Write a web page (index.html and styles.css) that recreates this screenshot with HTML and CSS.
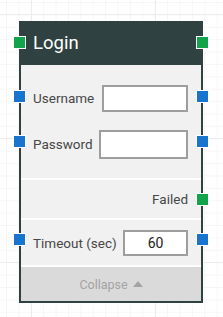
FILE: index.html
```html
<!DOCTYPE html>
<html>
<head>
<meta charset="utf-8">
<link rel="stylesheet" href="styles.css">
</head>
<body>
<div class="canvas">
  <div class="node">
    <div class="header">
      <span class="port port-green port-left port-head"></span>
      <span class="title">Login</span>
      <span class="port port-green port-right port-head"></span>
    </div>
    <div class="body">
      <div class="section inputs">
        <div class="row">
          <span class="port port-blue port-left"></span>
          <span class="label">Username</span>
          <span class="field field-user"></span>
          <span class="port port-blue port-right"></span>
        </div>
        <div class="row row-2">
          <span class="port port-blue port-left"></span>
          <span class="label">Password</span>
          <span class="field field-pass"></span>
          <span class="port port-blue port-right"></span>
        </div>
      </div>
      <div class="section outputs">
        <span class="label">Failed</span>
        <span class="port port-green port-right"></span>
      </div>
      <div class="section timeout">
        <span class="port port-blue port-left"></span>
        <span class="label">Timeout (sec)</span>
        <span class="field field-time">60</span>
        <span class="port port-blue port-right"></span>
      </div>
      <div class="collapse">Collapse <span class="tri"></span></div>
    </div>
  </div>
</div>
</body>
</html>
```
FILE: styles.css
```css
html, body {
  margin: 0;
  padding: 0;
}
body {
  width: 223px;
  height: 317px;
  overflow: hidden;
  font-family: Roboto, "Liberation Sans", sans-serif;
  background-color: #ffffff;
  background-image:
    linear-gradient(to right, #ececec 1px, transparent 1px),
    linear-gradient(to bottom, #ececec 1px, transparent 1px),
    linear-gradient(to right, #f6f6f6 1px, transparent 1px),
    linear-gradient(to bottom, #f6f6f6 1px, transparent 1px);
  background-size: 124px 124px, 124px 124px, 12.4px 12.4px, 12.4px 12.4px;
  background-position: 31px 14px, 31px 14px, 6px 2px, 6px 2px;
}
.canvas {
  padding: 21px 0 0 19px;
}
.node {
  width: 184px;
  position: relative;
}
.header {
  height: 44px;
  background: #2f4241;
  color: #ffffff;
  display: flex;
  align-items: center;
  padding-left: 14px;
  position: relative;
}
.title {
  font-size: 18.5px;
  line-height: 1;
}
.body {
  border: 2px solid #2f4241;
  border-top: none;
  background: #f1f1f1;
}
.port {
  position: absolute;
  width: 11px;
  height: 11px;
  border: 1.5px solid #ffffff;
  top: 13px;
}
.port-green { background: #13a34b; }
.port-blue { background: #1874cd; }
.port-left { left: -8px; }
.port-right { right: -8px; }
.header .port-left { left: -6px; }
.header .port-right { right: -6px; }
.port-head { top: 15px; }
.section {
  position: relative;
}
.inputs {
  padding: 11px 13px 12px 12px;
  display: flex;
  flex-direction: column;
  gap: 2px;
}
.row {
  position: relative;
  height: 44px;
  display: flex;
  align-items: center;
  justify-content: space-between;
}
.inputs .port-left { left: -20px; top: 14px; }
.inputs .port-right { right: -21px; top: 14px; }
.inputs .row-2 .port { top: 13px; }
.label {
  font-size: 13.5px;
  color: #474747;
}
.field {
  box-sizing: border-box;
  background: #ffffff;
  border: 2px solid #9e9e9e;
  display: block;
  font-size: 14px;
  color: #222;
  text-align: center;
}
.field-user { width: 86px; height: 27px; }
.field-pass { width: 89px; height: 29px; margin-top: 1px; }
.field-time { width: 65px; height: 26px; line-height: 22px; }
.outputs {
  border-top: 2px solid #ffffff;
  height: 38px;
  display: flex;
  align-items: center;
  justify-content: flex-end;
  padding-right: 13px;
}
.outputs .port-right { right: -8px; top: 13px; }
.timeout {
  border-top: 2px solid #ffffff;
  height: 45px;
  display: flex;
  align-items: center;
  justify-content: space-between;
  padding: 0 13px 0 12px;
}
.timeout .port { top: 13px; }
.collapse {
  border-top: 2px solid #ffffff;
  height: 34px;
  background: #dadada;
  color: #a4a4a4;
  font-size: 12.5px;
  display: flex;
  align-items: center;
  justify-content: center;
  gap: 5px;
}
.tri {
  width: 0;
  height: 0;
  border-left: 5px solid transparent;
  border-right: 5px solid transparent;
  border-bottom: 6px solid #a4a4a4;
  margin-top: -1px;
}
```
